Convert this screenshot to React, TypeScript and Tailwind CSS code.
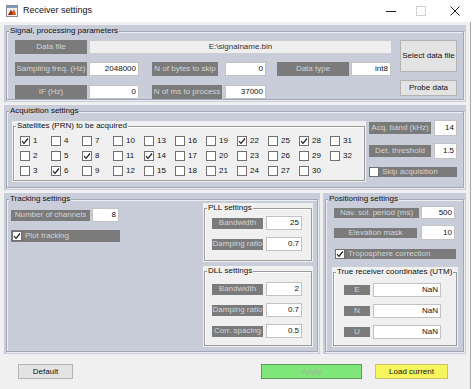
import type { ReactNode } from "react";

const FONT = "font-['Liberation_Sans',Arial,sans-serif]";

function Panel({ title, className, children }: { title: string; className: string; children?: ReactNode }) {
    return (
        <div className={`bg-[#c9ccd9] px-[2px] pb-[2px] pt-[6px] ${className}`}>
            <div className="relative h-full border border-[#a2a5b3] shadow-[inset_1px_1px_0_#eceef4,1px_1px_0_#eceef4]">
                <span className="absolute -top-[6px] left-[2px] bg-[#c9ccd9] px-[1px] text-[8px] leading-[10px] text-[#111]">
                    {title}
                </span>
                {children}
            </div>
        </div>
    );
}

function SubBox({ title, className, children }: { title: string; className: string; children?: ReactNode }) {
    return (
        <div className={`bg-[#f0f0f0] px-[1px] pb-[1px] pt-[5px] ${className}`}>
            <div className="relative h-full border border-[#9a9a9a] shadow-[inset_1px_1px_0_#fff]">
                <span className="absolute -top-[6px] left-[2px] bg-[#f0f0f0] px-[1px] text-[8px] leading-[10px] text-[#111]">
                    {title}
                </span>
                {children}
            </div>
        </div>
    );
}

function Label({ text, className }: { text: string; className: string }) {
    return (
        <div className={`flex items-center justify-center bg-[#7b7b7b] text-[8px] leading-none text-[#d4d4d4] ${className}`}>
            {text}
        </div>
    );
}

function Field({ value, className }: { value: string; className: string }) {
    return (
        <div className={`flex items-center justify-end border border-[#c2c2c2] bg-white pr-[2px] text-[8px] leading-none text-[#111] ${className}`}>
            {value}
        </div>
    );
}

function Check({ checked }: { checked?: boolean }) {
    return (
        <span className="flex h-[10px] w-[10px] shrink-0 items-center justify-center border border-[#707070] bg-white">
            {checked && (
                <svg width="8" height="8" viewBox="0 0 8 8">
                    <path d="M1 4.2 L3 6.3 L7 1.5" fill="none" stroke="#1a1a1a" strokeWidth="1.2" />
                </svg>
            )}
        </span>
    );
}

function CheckBar({ text, checked, className }: { text: string; checked?: boolean; className: string }) {
    return (
        <div className={`flex items-center gap-[3px] bg-[#7b7b7b] text-[8px] leading-none text-[#d4d4d4] ${className}`}>
            <Check checked={checked} />
            {text}
        </div>
    );
}

const checkedSats = [1, 6, 8, 14, 22, 28];

export default function App() {
    const cols = Array.from({ length: 11 }, (_, c) => [1, 2, 3].map((r) => c * 3 + r).filter((n) => n <= 32));

    return (
        <div className={`h-[389px] w-[474px] overflow-hidden bg-white ${FONT}`}>
            {/* title bar */}
            <div className="flex h-[22px] w-[470px] items-center bg-white">
                <svg className="ml-[6px]" width="12" height="12" viewBox="0 0 12 12">
                    <rect x="0.5" y="0.5" width="11" height="11" fill="#f3f3f3" stroke="#8a8a8a" />
                    <rect x="1" y="1" width="10" height="2" fill="#7f9cc4" />
                    <path d="M2 10 L5 5 L6.5 7 L8 4 L10 10 Z" fill="#d9541e" />
                    <path d="M5 5 L6.5 7 L5.5 10 L2 10 Z" fill="#a02a10" />
                </svg>
                <span className="ml-[5px] text-[9px] text-[#111]">Receiver settings</span>
                <div className="ml-auto flex items-center">
                    <svg width="10" height="10" viewBox="0 0 10 10" className="mr-[20px]">
                        <path d="M0 5.5 H10" stroke="#222" strokeWidth="1" />
                    </svg>
                    <svg width="10" height="10" viewBox="0 0 10 10" className="mr-[24px]">
                        <rect x="0.5" y="0.5" width="9" height="9" fill="none" stroke="#cfcfcf" />
                    </svg>
                    <svg width="10" height="10" viewBox="0 0 10 10" className="mr-[10px]">
                        <path d="M0.5 0.5 L9.5 9.5 M9.5 0.5 L0.5 9.5" stroke="#222" strokeWidth="1" />
                    </svg>
                </div>
            </div>

            {/* window body */}
            <div className="flex h-[367px] w-[471px] flex-col gap-[3px] border-r border-[#a8a8a8] bg-[#f0f0f0] pl-[4px] pt-[3px]">
                <Panel title="Signal, processing parameters" className="h-[77px] w-[462px]">
                    <div className="flex">
                        <div className="ml-[8px] mt-[8px] flex flex-col">
                            <div className="flex h-[14px]">
                                <Label text="Data file" className="w-[72px]" />
                                <div className="ml-[2px] flex w-[303px] items-center justify-center border border-[#cdcdcd] bg-[#efefef] text-[8px] leading-none text-[#333]">
                                    E:\signalname.bin
                                </div>
                            </div>
                            <div className="mt-[8px] flex h-[14px]">
                                <Label text="Sampling freq. (Hz)" className="w-[72px]" />
                                <Field value="2048000" className="ml-[2px] w-[50px]" />
                                <Label text="N of bytes to skip" className="ml-[13px] w-[66px]" />
                                <Field value="0" className="ml-[7px] w-[41px]" />
                                <Label text="Data type" className="ml-[11px] w-[72px]" />
                                <Field value="int8" className="ml-[2px] w-[40px]" />
                            </div>
                            <div className="mt-[9px] flex h-[14px]">
                                <Label text="IF (Hz)" className="w-[72px]" />
                                <Field value="0" className="ml-[2px] w-[50px]" />
                                <Label text="N of ms to process" className="ml-[13px] w-[70px]" />
                                <Field value="37000" className="ml-[3px] w-[41px]" />
                            </div>
                        </div>
                        <div className="ml-[8px] mt-[8px] flex w-[57px] flex-col">
                            <button className="h-[32px] border border-[#b4b4b4] bg-[#e3e3e3] text-[8px] text-[#111]">Select data file</button>
                            <button className="mt-[8px] h-[16px] border border-[#b4b4b4] bg-[#e3e3e3] text-[8px] text-[#111]">Probe data</button>
                        </div>
                    </div>
                </Panel>

                <Panel title="Acquisition settings" className="h-[85px] w-[462px]">
                    <div className="flex items-start">
                        <SubBox title="Satellites (PRN) to be acquired" className="ml-[5px] mt-[9px] h-[61px] w-[354px]">
                            <div className="flex pl-[6px] pt-[6px]">
                                {cols.map((col, i) => (
                                    <div key={i} className="flex w-[31px] flex-col">
                                        {col.map((n) => (
                                            <div key={n} className="flex h-[15px] items-center gap-[3px] text-[8px] leading-none text-[#111]">
                                                <Check checked={checkedSats.includes(n)} />
                                                {n}
                                            </div>
                                        ))}
                                    </div>
                                ))}
                            </div>
                        </SubBox>
                        <div className="ml-[3px] mt-[8px] flex flex-col">
                            <div className="flex h-[16px] items-center">
                                <Label text="Acq. band (kHz)" className="h-[12px] w-[62px]" />
                                <Field value="14" className="ml-[3px] h-[16px] w-[23px]" />
                            </div>
                            <div className="mt-[7px] flex h-[16px] items-center">
                                <Label text="Det. threshold" className="h-[12px] w-[62px]" />
                                <Field value="1.5" className="ml-[3px] h-[16px] w-[23px]" />
                            </div>
                            <CheckBar text="Skip acquisition" className="mt-[8px] h-[10px] w-[88px]" />
                        </div>
                    </div>
                </Panel>

                <div className="flex gap-[3px]">
                    <Panel title="Tracking settings" className="h-[161px] w-[316px]">
                        <div className="flex">
                            <div className="ml-[4px] mt-[8px] flex flex-col">
                                <div className="flex h-[14px] items-center">
                                    <Label text="Number of channels" className="h-[11px] w-[79px]" />
                                    <Field value="8" className="ml-[2px] h-[14px] w-[27px]" />
                                </div>
                                <CheckBar text="Plot tracking" checked className="mt-[8px] h-[12px] w-[109px] pl-[1px]" />
                            </div>
                            <div className="ml-auto mr-[4px] mt-[3px] flex flex-col gap-[4px]">
                                <SubBox title="PLL settings" className="h-[59px] w-[110px]">
                                    <div className="flex flex-col gap-[7px] pl-[7px] pt-[7px]">
                                        <div className="flex h-[14px] items-center">
                                            <Label text="Bandwidth" className="h-[11px] w-[51px]" />
                                            <Field value="25" className="ml-[3px] h-[14px] w-[36px]" />
                                        </div>
                                        <div className="flex h-[14px] items-center">
                                            <Label text="Damping ratio" className="h-[11px] w-[51px]" />
                                            <Field value="0.7" className="ml-[3px] h-[14px] w-[36px]" />
                                        </div>
                                    </div>
                                </SubBox>
                                <SubBox title="DLL settings" className="h-[81px] w-[110px]">
                                    <div className="flex flex-col gap-[7px] pl-[7px] pt-[10px]">
                                        <div className="flex h-[14px] items-center">
                                            <Label text="Bandwidth" className="h-[11px] w-[51px]" />
                                            <Field value="2" className="ml-[3px] h-[14px] w-[36px]" />
                                        </div>
                                        <div className="flex h-[14px] items-center">
                                            <Label text="Damping ratio" className="h-[11px] w-[51px]" />
                                            <Field value="0.7" className="ml-[3px] h-[14px] w-[36px]" />
                                        </div>
                                        <div className="flex h-[14px] items-center">
                                            <Label text="Corr. spacing" className="h-[11px] w-[51px]" />
                                            <Field value="0.5" className="ml-[3px] h-[14px] w-[36px]" />
                                        </div>
                                    </div>
                                </SubBox>
                            </div>
                        </div>
                    </Panel>

                    <Panel title="Positioning settings" className="h-[161px] w-[143px]">
                        <div className="flex flex-col">
                            <div className="ml-[8px] mt-[6px] flex h-[13px] items-center">
                                <Label text="Nav. sol. period (ms)" className="h-[10px] w-[85px]" />
                                <Field value="500" className="ml-[2px] h-[13px] w-[34px]" />
                            </div>
                            <div className="ml-[8px] mt-[6px] flex h-[15px] items-center">
                                <Label text="Elevation mask" className="h-[10px] w-[83px]" />
                                <Field value="10" className="ml-[4px] h-[15px] w-[34px]" />
                            </div>
                            <CheckBar text="Troposphere correction" checked className="ml-[9px] mt-[9px] h-[10px] w-[121px]" />
                            <SubBox title="True receiver coordinates (UTM)" className="ml-[6px] mt-[8px] h-[80px] w-[126px]">
                                <div className="flex flex-col gap-[7px] pl-[10px] pt-[10px]">
                                    {["E", "N", "U"].map((k) => (
                                        <div key={k} className="flex h-[14px] items-center">
                                            <Label text={k} className="h-[10px] w-[26px]" />
                                            <Field value="NaN" className="ml-[3px] h-[14px] w-[68px]" />
                                        </div>
                                    ))}
                                </div>
                            </SubBox>
                        </div>
                    </Panel>
                </div>

                <div className="mt-[7px] flex h-[15px]">
                    <button className="ml-[14px] w-[55px] border border-[#b4b4b4] bg-[#e3e3e3] text-[8px] text-[#111]">Default</button>
                    <button className="ml-[188px] w-[101px] border border-[#5f9c5a] bg-[#7fe67a] text-[8px] text-[#9ab894]">Apply</button>
                    <button className="ml-[13px] w-[73px] border border-[#c9c46a] bg-[#f7f55c] text-[8px] text-[#111]">Load current</button>
                </div>
            </div>
        </div>
    );
}
